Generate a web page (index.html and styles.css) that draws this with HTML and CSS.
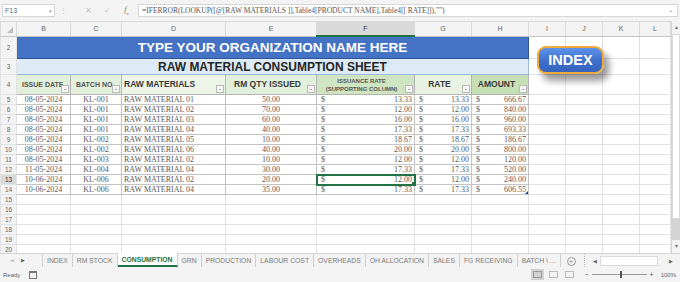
FILE: index.html
```html
<!DOCTYPE html>
<html lang="en">
<head>
	<meta charset="UTF-8">
	<title>Raw Material Consumption Sheet</title>
	<link rel="stylesheet" href="styles.css">
</head>
<body>
<div class="app">

	<div class="formula-bar">
		<div class="name-box">F13<span class="nb-drop">&#9662;</span></div>
		<span class="fb-dots">&#8942;</span>
		<span class="fb-btn">&#10005;</span>
		<span class="fb-btn">&#10003;</span>
		<span class="fb-btn fx"><i>f</i><sub>x</sub></span>
		<div class="formula">=IFERROR(LOOKUP([@[RAW MATERIALS ]],Table4[PRODUCT NAME],Table4[[ RATE]]),"")<span class="fm-drop">&#8964;</span></div>
	</div>

	<div class="sheet">
		<table class="grid">
			<colgroup>
				<col class="c-rn"><col class="c-b"><col class="c-c"><col class="c-d"><col class="c-e"><col class="c-f">
				<col class="c-g"><col class="c-h"><col class="c-x"><col class="c-x"><col class="c-x"><col class="c-l">
			</colgroup>
			<thead>
				<tr class="letters">
					<th class="corner"><span class="tri"></span></th>
					<th>B</th><th>C</th><th>D</th><th>E</th><th class="sel">F</th><th>G</th><th>H</th>
					<th>I</th><th>J</th><th>K</th><th>L</th>
				</tr>
			</thead>
			<tbody>
				<tr class="r-org">
					<th>2</th>
					<td colspan="7" class="org">TYPE YOUR ORGANIZATION NAME HERE</td>
					<td></td><td></td><td></td><td></td>
				</tr>
				<tr class="r-sub">
					<th>3</th>
					<td colspan="7" class="sub">RAW MATERIAL CONSUMPTION SHEET</td>
					<td></td><td></td><td></td><td></td>
				</tr>
				<tr class="r-head">
					<th>4</th>
					<td class="th th-b"><div class="hcell small"><span class="lbl">ISSUE DATE</span><i class="flt"></i></div></td>
					<td class="th th-c"><div class="hcell small"><span class="lbl">BATCH NO</span><i class="flt"></i></div></td>
					<td class="th th-d"><div class="hcell left"><span class="lbl">RAW MATERIALS</span><i class="flt"></i></div></td>
					<td class="th th-e"><div class="hcell"><span class="lbl">RM QTY ISSUED</span><i class="flt"></i></div></td>
					<td class="th th-f"><div class="hcell tiny"><span class="lbl">ISSUANCE RATE<br>(SUPPORTING COLUMN)</span><i class="flt"></i></div></td>
					<td class="th th-g"><div class="hcell"><span class="lbl">RATE</span><i class="flt"></i></div></td>
					<td class="th th-h"><div class="hcell"><span class="lbl">AMOUNT</span><i class="flt"></i></div></td>
					<td></td><td></td><td></td><td></td>
				</tr>

				<tr class="row"><th>5</th><td class="ctr">08-05-2024</td><td class="ctr">KL-001</td><td>RAW MATERIAL 01</td><td class="ctr">50.00</td>
					<td><div class="cur"><span>$</span><span>13.33</span></div></td><td><div class="cur"><span>$</span><span>13.33</span></div></td><td><div class="cur"><span>$</span><span>666.67</span></div></td>
					<td class="e"></td><td class="e"></td><td class="e"></td><td class="e"></td></tr>
				<tr class="row"><th>6</th><td class="ctr">08-05-2024</td><td class="ctr">KL-001</td><td>RAW MATERIAL 02</td><td class="ctr">70.00</td>
					<td><div class="cur"><span>$</span><span>12.00</span></div></td><td><div class="cur"><span>$</span><span>12.00</span></div></td><td><div class="cur"><span>$</span><span>840.00</span></div></td>
					<td class="e"></td><td class="e"></td><td class="e"></td><td class="e"></td></tr>
				<tr class="row"><th>7</th><td class="ctr">08-05-2024</td><td class="ctr">KL-001</td><td>RAW MATERIAL 03</td><td class="ctr">60.00</td>
					<td><div class="cur"><span>$</span><span>16.00</span></div></td><td><div class="cur"><span>$</span><span>16.00</span></div></td><td><div class="cur"><span>$</span><span>960.00</span></div></td>
					<td class="e"></td><td class="e"></td><td class="e"></td><td class="e"></td></tr>
				<tr class="row"><th>8</th><td class="ctr">08-05-2024</td><td class="ctr">KL-001</td><td>RAW MATERIAL 04</td><td class="ctr">40.00</td>
					<td><div class="cur"><span>$</span><span>17.33</span></div></td><td><div class="cur"><span>$</span><span>17.33</span></div></td><td><div class="cur"><span>$</span><span>693.33</span></div></td>
					<td class="e"></td><td class="e"></td><td class="e"></td><td class="e"></td></tr>
				<tr class="row"><th>9</th><td class="ctr">08-05-2024</td><td class="ctr">KL-002</td><td>RAW MATERIAL 05</td><td class="ctr">10.00</td>
					<td><div class="cur"><span>$</span><span>18.67</span></div></td><td><div class="cur"><span>$</span><span>18.67</span></div></td><td><div class="cur"><span>$</span><span>186.67</span></div></td>
					<td class="e"></td><td class="e"></td><td class="e"></td><td class="e"></td></tr>
				<tr class="row"><th>10</th><td class="ctr">08-05-2024</td><td class="ctr">KL-002</td><td>RAW MATERIAL 06</td><td class="ctr">40.00</td>
					<td><div class="cur"><span>$</span><span>20.00</span></div></td><td><div class="cur"><span>$</span><span>20.00</span></div></td><td><div class="cur"><span>$</span><span>800.00</span></div></td>
					<td class="e"></td><td class="e"></td><td class="e"></td><td class="e"></td></tr>
				<tr class="row"><th>11</th><td class="ctr">08-05-2024</td><td class="ctr">KL-003</td><td>RAW MATERIAL 02</td><td class="ctr">10.00</td>
					<td><div class="cur"><span>$</span><span>12.00</span></div></td><td><div class="cur"><span>$</span><span>12.00</span></div></td><td><div class="cur"><span>$</span><span>120.00</span></div></td>
					<td class="e"></td><td class="e"></td><td class="e"></td><td class="e"></td></tr>
				<tr class="row"><th>12</th><td class="ctr">11-05-2024</td><td class="ctr">KL-004</td><td>RAW MATERIAL 04</td><td class="ctr">30.00</td>
					<td><div class="cur"><span>$</span><span>17.33</span></div></td><td><div class="cur"><span>$</span><span>17.33</span></div></td><td><div class="cur"><span>$</span><span>520.00</span></div></td>
					<td class="e"></td><td class="e"></td><td class="e"></td><td class="e"></td></tr>
				<tr class="row"><th class="sel">13</th><td class="ctr">10-06-2024</td><td class="ctr">KL-006</td><td>RAW MATERIAL 02</td><td class="ctr">20.00</td>
					<td class="active"><div class="cur"><span>$</span><span>12.00</span></div></td><td><div class="cur"><span>$</span><span>12.00</span></div></td><td><div class="cur"><span>$</span><span>240.00</span></div></td>
					<td class="e"></td><td class="e"></td><td class="e"></td><td class="e"></td></tr>
				<tr class="row"><th>14</th><td class="ctr">10-06-2024</td><td class="ctr">KL-006</td><td>RAW MATERIAL 04</td><td class="ctr">35.00</td>
					<td><div class="cur"><span>$</span><span>17.33</span></div></td><td><div class="cur"><span>$</span><span>17.33</span></div></td><td class="tbl-end"><div class="cur"><span>$</span><span>606.55</span></div></td>
					<td class="e"></td><td class="e"></td><td class="e"></td><td class="e"></td></tr>

				<tr class="row empty"><th>15</th><td></td><td></td><td></td><td></td><td></td><td></td><td></td><td></td><td></td><td></td><td></td></tr>
				<tr class="row empty"><th>16</th><td></td><td></td><td></td><td></td><td></td><td></td><td></td><td></td><td></td><td></td><td></td></tr>
				<tr class="row empty"><th>17</th><td></td><td></td><td></td><td></td><td></td><td></td><td></td><td></td><td></td><td></td><td></td></tr>
				<tr class="row empty"><th>18</th><td></td><td></td><td></td><td></td><td></td><td></td><td></td><td></td><td></td><td></td><td></td></tr>
				<tr class="row empty"><th>19</th><td></td><td></td><td></td><td></td><td></td><td></td><td></td><td></td><td></td><td></td><td></td></tr>
				<tr class="row empty"><th>20</th><td></td><td></td><td></td><td></td><td></td><td></td><td></td><td></td><td></td><td></td><td></td></tr>
			</tbody>
		</table>

		<div class="vscroll">
			<span class="vs-arrow">&#9652;</span>
			<div class="vs-thumb"></div>
			<div class="vs-track"></div>
			<span class="vs-arrow">&#9662;</span>
		</div>

		<!-- floating shape on the sheet -->
		<div class="index-btn">INDEX</div>
	</div>

	<div class="tabs">
		<span class="tab-nav">&#9664;</span>
		<span class="tab-nav dark">&#9654;</span>
		<div class="tab-list">
			<span class="tab">INDEX</span>
			<span class="tab">RM STOCK</span>
			<span class="tab active">CONSUMPTION</span>
			<span class="tab">GRN</span>
			<span class="tab">PRODUCTION</span>
			<span class="tab">LABOUR COST</span>
			<span class="tab">OVERHEADS</span>
			<span class="tab">OH ALLOCATION</span>
			<span class="tab">SALES</span>
			<span class="tab">FG RECEIVING</span>
			<span class="tab">BATCH \ ...</span>
			<span class="tab-add">+</span>
		</div>
		<div class="hscroll">
			<span class="hs-arrow">&#9664;</span>
			<div class="hs-thumb"></div>
			<span class="hs-arrow">&#9654;</span>
		</div>
	</div>

	<div class="status">
		<span class="ready">Ready</span>
		<span class="macro"></span>
		<div class="status-right">
			<span class="view on"></span>
			<span class="view"></span>
			<span class="view"></span>
			<span class="zm">&minus;</span>
			<div class="slider"><span class="knob"></span></div>
			<span class="zm">+</span>
			<span class="pct">100%</span>
		</div>
	</div>

</div>
</body>
</html>
```

FILE: styles.css
```css
html, body {
	margin: 0;
	padding: 0;
}
body {
	width: 680px;
	height: 282px;
	overflow: hidden;
	background: #fff;
	font-family: "Liberation Sans", Arial, sans-serif;
}
.app {
	display: flex;
	flex-direction: column;
	width: 680px;
	height: 282px;
}

/* formula bar */
.formula-bar {
	display: flex;
	align-items: center;
	height: 21px;
	background: #f3f3f3;
	padding: 0 2px;
	box-sizing: border-box;
	color: #888;
}
.name-box {
	display: flex;
	justify-content: space-between;
	align-items: center;
	width: 53px;
	height: 13px;
	background: #fff;
	border: 1px solid #d6d6d6;
	box-sizing: border-box;
	font-size: 7px;
	color: #666;
	padding: 0 2px;
}
.nb-drop {
	font-size: 5px;
	color: #999;
}
.fb-dots {
	font-size: 7px;
	color: #bbb;
	margin: 0 12px 0 5px;
}
.fb-btn {
	font-size: 8px;
	color: #c2c2c2;
	width: 19px;
	text-align: center;
}
.fb-btn.fx {
	color: #777;
	font-family: "Liberation Serif", serif;
	font-size: 8px;
}
.fb-btn.fx sub {
	font-size: 5px;
}
.formula {
	flex: 1;
	display: flex;
	justify-content: space-between;
	align-items: center;
	height: 13px;
	margin-left: 2px;
	background: #fff;
	border: 1px solid #d6d6d6;
	box-sizing: border-box;
	padding: 0 3px;
	font-family: "Liberation Serif", serif;
	font-size: 7.5px;
	color: #555;
	white-space: nowrap;
}
.fm-drop {
	color: #888;
	font-size: 7px;
	line-height: 5px;
}

/* sheet */
.sheet {
	position: relative;
	display: flex;
	height: 232px;
	overflow: hidden;
}
.grid {
	border-collapse: collapse;
	table-layout: fixed;
	width: 670px;
	font-family: "Liberation Serif", serif;
	font-size: 8px;
	color: #595959;
}
.c-rn { width: 16px; }
.c-b { width: 54px; }
.c-c { width: 51px; }
.c-d { width: 104px; }
.c-e { width: 91px; }
.c-f { width: 98px; }
.c-g { width: 57px; }
.c-h { width: 57px; }
.c-x { width: 37px; }
.c-l { width: 31px; }

.grid td, .grid th {
	padding: 0;
	border: 1px solid #e2e2e2;
	overflow: hidden;
	white-space: nowrap;
}
.letters th {
	height: 13px;
	background: #f3f3f3;
	border-color: #d9d9d9;
	border-bottom: 1px solid #c6c6c6;
	font-family: "Liberation Sans", sans-serif;
	font-weight: normal;
	font-size: 7px;
	color: #666;
}
.letters th.sel {
	background: #d9d9d9;
	border-bottom: 2px solid #217346;
	color: #3a3a3a;
}
.tri {
	display: block;
	width: 0;
	height: 0;
	margin: 3px 0 0 6px;
	border-left: 6px solid transparent;
	border-bottom: 6px solid #bcbcbc;
}
tbody th {
	background: #f3f3f3;
	border-color: #d9d9d9;
	border-right: 1px solid #c6c6c6;
	font-family: "Liberation Sans", sans-serif;
	font-weight: normal;
	font-size: 6.5px;
	color: #666;
	text-align: center;
}
tbody th.sel {
	background: #d9d9d9;
	color: #333;
}

.r-org td { height: 21px; }
.r-sub td { height: 15px; }
.r-head td { height: 19px; }
.row td, .row th { height: 9px; line-height: 9px; }

.org {
	background: #4472c4;
	border: 1px solid #2f5597 !important;
	color: #fff;
	font-weight: bold;
	font-size: 13.5px;
	text-align: center;
	font-family: "Liberation Sans", sans-serif;
}
.sub {
	background: #ddebf7;
	border: 1px solid #9bb7d9 !important;
	color: #262626;
	font-weight: bold;
	font-size: 12px;
	text-align: center;
	font-family: "Liberation Sans", sans-serif;
}

.th {
	border: 1px solid #b4b4b4 !important;
	font-family: "Liberation Sans", sans-serif;
	font-weight: bold;
	color: #3a3a3a;
	vertical-align: top;
}
.th-b, .th-c, .th-e { background: #e2efda; }
.th-d { background: #edf5e8; }
.th-f { background: #cfe4c0; }
.th-g { background: #e8f2e2; }
.th-h { background: #c6e0b4; }

.hcell {
	display: flex;
	align-items: center;
	height: 19px;
	font-size: 8.5px;
	padding-left: 2px;
}
.hcell .lbl {
	flex: 1;
	text-align: center;
	overflow: hidden;
	padding-bottom: 2px;
}
.hcell.left .lbl {
	text-align: left;
}
.hcell.small {
	font-size: 7px;
	color: #555;
}
.hcell.small .lbl {
	text-align: left;
	padding-left: 3px;
	padding-bottom: 1px;
	margin-right: -3px;
}
.hcell.tiny {
	font-size: 6px;
	line-height: 8px;
	color: #555;
	padding-left: 1px;
}
.hcell.tiny .lbl {
	padding-bottom: 0;
}
.flt {
	align-self: flex-end;
	flex: none;
	position: relative;
	width: 6px;
	height: 6px;
	margin: 0 1px 1px 0;
	background: #f7f7f7;
	border: 1px solid #b9b9b9;
}
.flt::after {
	content: "";
	position: absolute;
	left: 1.5px;
	top: 2.5px;
	border-left: 1.5px solid transparent;
	border-right: 1.5px solid transparent;
	border-top: 1.5px solid #555;
}

.row td {
	border-color: #c3c3c3;
	padding: 0 2px;
}
.row td.e, .row.empty td {
	border-color: #e2e2e2;
}
.row td.ctr {
	text-align: center;
}
.cur {
	display: flex;
	justify-content: space-between;
	padding-left: 2px;
}
td.active {
	position: relative;
	outline: 2px solid #217346;
	outline-offset: -1px;
}
td.active::after {
	content: "";
	position: absolute;
	right: -2px;
	bottom: -2px;
	width: 3px;
	height: 3px;
	background: #217346;
	border: 1px solid #fff;
}
td.tbl-end {
	position: relative;
}
td.tbl-end::after {
	content: "";
	position: absolute;
	right: 0;
	bottom: 0;
	border-left: 3px solid transparent;
	border-bottom: 3px solid #1f3d9a;
}

/* vertical scrollbar */
.vscroll {
	display: flex;
	flex-direction: column;
	align-items: center;
	width: 10px;
	background: #f3f3f3;
	border-left: 1px solid #d6d6d6;
	box-sizing: border-box;
}
.vs-arrow {
	font-size: 6px;
	line-height: 13px;
	height: 13px;
	color: #777;
}
.vs-thumb {
	width: 8px;
	height: 185px;
	background: #fff;
	border: 1px solid #dadada;
	box-sizing: border-box;
}
.vs-track {
	flex: 1;
	width: 8px;
	background: #d4d4d4;
}

/* floating index button */
.index-btn {
	position: absolute;
	left: 537px;
	top: 25px;
	width: 67px;
	height: 28px;
	box-sizing: border-box;
	border: 2px solid #f2a93b;
	border-radius: 9px;
	background: linear-gradient(#5f93e8, #3d6fcb 55%, #3563bd);
	box-shadow: 5px 7px 7px rgba(0, 0, 0, 0.4);
	color: #fff;
	font-weight: bold;
	font-size: 14.5px;
	line-height: 24px;
	text-align: center;
}

/* sheet tabs */
.tabs {
	display: flex;
	align-items: stretch;
	height: 14px;
	background: #f3f3f3;
	border-top: 1px solid #d6d6d6;
	box-sizing: border-box;
}
.tab-nav {
	width: 11px;
	font-size: 5px;
	line-height: 13px;
	text-align: center;
	color: #c4c4c4;
	margin-left: 6px;
}
.tab-nav.dark {
	color: #666;
	margin-left: 0;
}
.tab-list {
	display: flex;
	margin-left: 14px;
	border-left: 1px solid #cfcfcf;
}
.tab {
	padding: 0 4px;
	font-size: 6.8px;
	line-height: 13px;
	color: #7a7a7a;
	border-right: 1px solid #cfcfcf;
	white-space: nowrap;
}
.tab.active {
	background: #fff;
	color: #217346;
	font-weight: bold;
	border-bottom: 2px solid #217346;
	margin-top: -1px;
}
.tab-add {
	width: 7px;
	height: 7px;
	margin: 3px 0 0 6px;
	border: 1px solid #9a9a9a;
	border-radius: 50%;
	font-size: 6px;
	line-height: 7px;
	text-align: center;
	color: #777;
}
.hscroll {
	display: flex;
	align-items: center;
	margin-left: 8px;
	padding-left: 5px;
	flex: 1;
	border-left: 1px dotted #bbb;
}
.hs-arrow {
	font-size: 5px;
	color: #666;
	width: 10px;
	text-align: center;
}
.hs-thumb {
	width: 58px;
	height: 10px;
	background: #fff;
	border: 1px solid #dadada;
	box-sizing: border-box;
}
.hs-thumb + .hs-arrow {
	margin-left: auto;
	margin-right: 4px;
}

/* status bar */
.status {
	display: flex;
	align-items: center;
	flex: 1;
	background: #f3f3f3;
	padding: 0 3px;
}
.ready {
	font-size: 6px;
	color: #666;
}
.macro {
	width: 6px;
	height: 5px;
	margin-left: 9px;
	border: 1px solid #777;
	border-top-width: 2px;
}
.status-right {
	display: flex;
	align-items: center;
	margin-left: auto;
}
.view {
	width: 9px;
	height: 7px;
	margin-right: 7px;
	border: 1px solid #bbb;
	box-sizing: border-box;
}
.view.on {
	background: #d0d0d0;
	border-color: #999;
	box-shadow: 0 0 0 2px #d0d0d0;
}
.zm {
	font-size: 7px;
	color: #666;
	margin: 0 3px;
}
.slider {
	position: relative;
	width: 55px;
	height: 1px;
	background: #999;
}
.knob {
	position: absolute;
	left: 28px;
	top: -3px;
	width: 2px;
	height: 7px;
	background: #555;
}
.pct {
	font-size: 6px;
	color: #666;
	margin: 0 1px 0 4px;
}
```
